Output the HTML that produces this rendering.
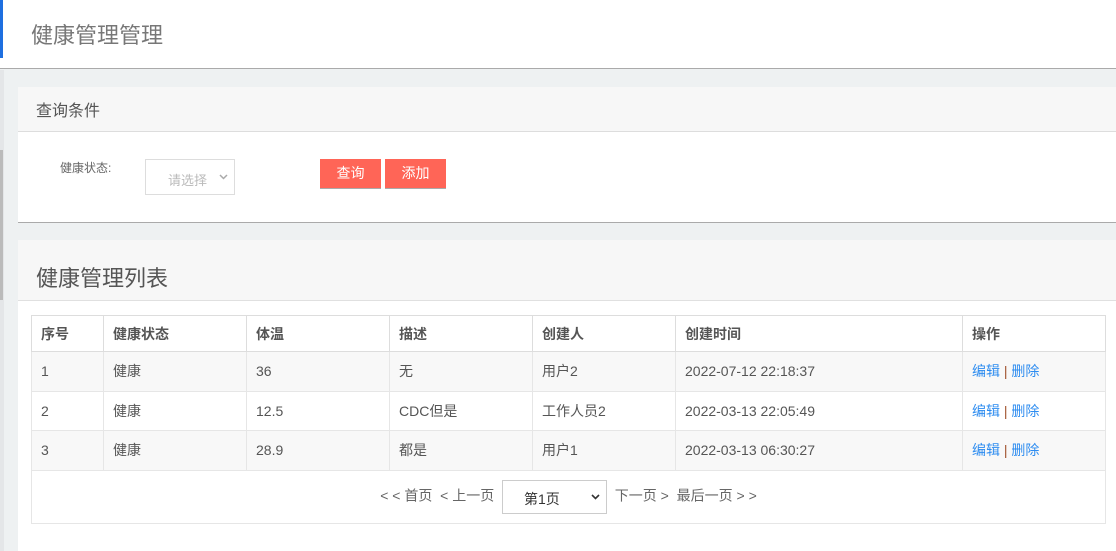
<!DOCTYPE html>
<html><head><meta charset="utf-8"><style>
*{margin:0;padding:0;box-sizing:border-box}
body{width:1116px;height:551px;overflow:hidden;background:#eef1f2;font-family:"Liberation Sans","Noto Sans CJK SC",sans-serif;color:#555;position:relative}
.a{position:absolute}
table{border-collapse:collapse;font-size:14px}
td,th{border:1px solid #e6e6e6;text-align:left;padding:0 9px}
th{height:36px;font-weight:bold;color:#555;border-color:#ddd}
td{height:39.5px;color:#555}
tr.g td{background:#f8f8f8}
a{color:#2d8cf0;text-decoration:none}
.sep{color:#a0522d}
</style></head><body>
<div class="a" style="left:0;top:0;width:1116px;height:69px;background:#fff;border-bottom:1px solid #aaa"></div>
<div class="a" style="left:0;top:0;width:3px;height:58px;background:#1e6fe0"></div>
<div class="a" style="left:31px;top:18px;font-size:22px;color:#777">健康管理管理</div>
<div class="a" style="left:0;top:70px;width:4px;height:481px;background:#e4e6e8"></div>
<div class="a" style="left:0;top:150px;width:3px;height:150px;background:#bbb"></div>

<div class="a" style="left:18px;top:87px;width:1098px;height:136px;background:#fff;border-bottom:1px solid #aaa">
 <div style="height:45px;background:#f7f7f7;border-bottom:1px solid #ddd;padding:10px 0 0 18px;font-size:16px;color:#555">查询条件</div>
 <div class="a" style="left:42px;top:72px;font-size:12px;color:#666">健康状态:</div>
 <div class="a" style="left:127px;top:72px;width:90px;height:36px;border:1px solid #ddd;font-size:13px;color:#bbb;padding:10px 0 0 22px">请选择<svg style="position:absolute;right:6px;top:14px" width="9" height="6" viewBox="0 0 9 6"><path d="M1 1l3.5 3.5L8 1" fill="none" stroke="#aaa" stroke-width="1.5"/></svg></div>
 <div class="a" style="left:302px;top:72px;width:61px;height:29px;background:#ff6557;color:#fff;font-size:14px;text-align:center;line-height:29px;box-shadow:0 1px 0 #aaa">查询</div>
 <div class="a" style="left:367px;top:72px;width:61px;height:29px;background:#ff6557;color:#fff;font-size:14px;text-align:center;line-height:29px;box-shadow:0 1px 0 #aaa">添加</div>
</div>

<div class="a" style="left:18px;top:240px;width:1098px;height:311px;background:#fff">
 <div style="height:61px;background:#f7f7f7;border-bottom:1px solid #e0e0e0;padding:21px 0 0 18px;font-size:22px;color:#555">健康管理列表</div>
</div>

<table class="a" style="left:31px;top:315px;width:1075px">
<tr><th style="width:72px">序号</th><th style="width:143px">健康状态</th><th style="width:143px">体温</th><th style="width:143px">描述</th><th style="width:143px">创建人</th><th style="width:287px">创建时间</th><th>操作</th></tr>
<tr class="g"><td>1</td><td>健康</td><td>36</td><td>无</td><td>用户2</td><td>2022-07-12 22:18:37</td><td><a>编辑</a> <span class="sep">|</span> <a>删除</a></td></tr>
<tr><td>2</td><td>健康</td><td>12.5</td><td>CDC但是</td><td>工作人员2</td><td>2022-03-13 22:05:49</td><td><a>编辑</a> <span class="sep">|</span> <a>删除</a></td></tr>
<tr class="g"><td>3</td><td>健康</td><td>28.9</td><td>都是</td><td>用户1</td><td>2022-03-13 06:30:27</td><td><a>编辑</a> <span class="sep">|</span> <a>删除</a></td></tr>
<tr><td colspan="7" style="height:53px;text-align:center;font-size:14px;color:#666">&lt; &lt; 首页 &nbsp;&lt; 上一页 &nbsp;<span style="display:inline-block;width:105px;height:34px;border:1px solid #ccc;vertical-align:middle;text-align:left;padding:8px 0 0 21px;color:#333;position:relative">第1页<svg style="position:absolute;right:6px;top:13px" width="9" height="6" viewBox="0 0 9 6"><path d="M1 1l3.5 3.5L8 1" fill="none" stroke="#333" stroke-width="1.6"/></svg></span>&nbsp; 下一页 &gt; &nbsp;最后一页 &gt; &gt;</td></tr>
</table>
</body></html>
